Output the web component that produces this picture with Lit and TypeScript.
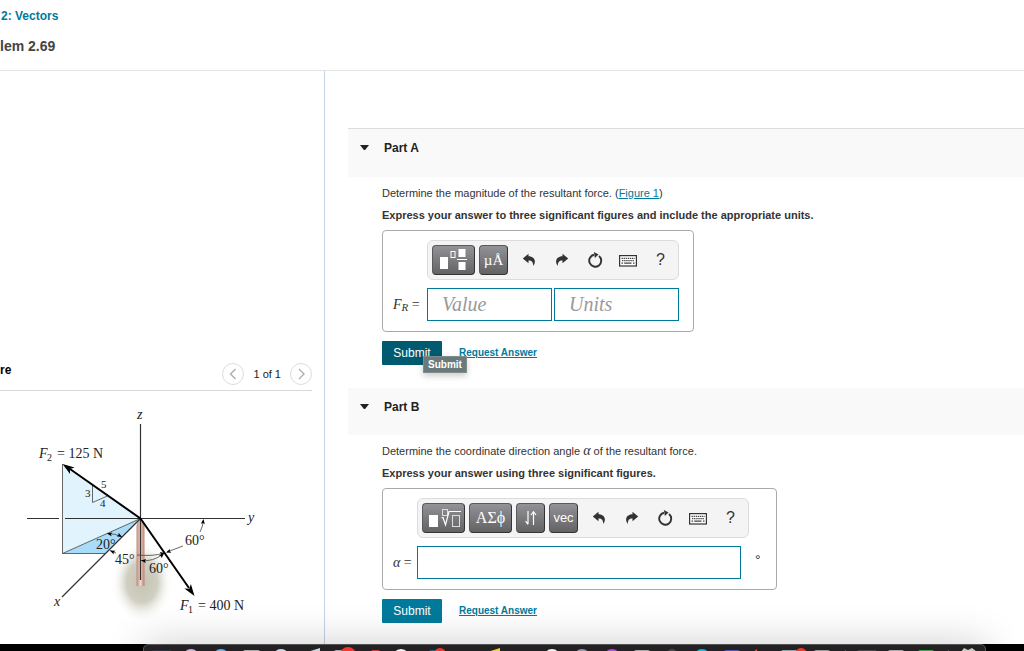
import { LitElement, html, svg, css } from "lit";
import { customElement, property } from "lit/decorators.js";

const undoIcon = html`<svg width="14" height="14" viewBox="0 0 14 14" aria-hidden="true">
  <path d="M6.500 0.800 L0.800 5.500 L6.500 10.200 V7.600 C9.500 7.400 11.200 9 11.200 13 C15 8 12 3.200 6.500 3.200 Z" fill="#333" />
</svg>`;
const redoIcon = html`<svg width="14" height="14" viewBox="0 0 14 14" aria-hidden="true">
  <path d="M7.500 0.800 L13.200 5.500 L7.500 10.200 V7.600 C4.500 7.400 2.800 9 2.800 13 C-1 8 2 3.200 7.500 3.200 Z" fill="#333" />
</svg>`;
const resetIcon = html`<svg width="16" height="16" viewBox="0 0 16 16" aria-hidden="true">
  <path d="M12 4 A6 6 0 1 1 7 2.800" fill="none" stroke="#333" stroke-width="1.900" />
  <path d="M7 0 L11.500 2.600 L7.800 6 Z" fill="#333" />
</svg>`;
const keyboardIcon = html`<svg width="18" height="13" viewBox="0 0 18 13" aria-hidden="true">
  <rect x="0.6" y="1.6" width="16.800" height="10.400" fill="#fff" stroke="#333" stroke-width="1.200" />
  <path d="M2.500 4.300 H15.700 M3 6.600 H15.500" stroke="#444" stroke-width="1.300" stroke-dasharray="1.400 0.700" />
  <path d="M2.500 9.200 H4 M5.200 9.200 H12.500 M14 9.200 H15.500" stroke="#444" stroke-width="1.300" />
</svg>`;
const templateIcon = html`<svg width="29" height="24" viewBox="0 0 29 24" aria-hidden="true">
  <rect x="1" y="9" width="8" height="12" fill="#fff" />
  <rect x="12" y="3.5" width="4" height="6" fill="none" stroke="#fff" />
  <rect x="19.500" y="1" width="7" height="8" fill="#fff" />
  <path d="M18 11.5 H28" stroke="#fff" />
  <rect x="19.500" y="14" width="7" height="8" fill="#fff" />
</svg>`;
const rootIcon = html`<svg width="34" height="24" viewBox="0 0 34 24" aria-hidden="true">
  <rect x="2" y="9" width="9" height="12" fill="#fff" />
  <rect x="15.5" y="3.5" width="5" height="6" fill="none" stroke="#ddd" />
  <path d="M14.5 12 L16 11.5 L18.5 19 L22 5.5 H34" fill="none" stroke="#fff" stroke-width="1.2" />
  <rect x="25.5" y="9.5" width="7" height="11" fill="none" stroke="#ddd" />
</svg>`;
const sortIcon = html`<svg width="13" height="16" viewBox="0 0 13 16" aria-hidden="true">
  <path d="M4 1 V14 M1.5 11 L4 14.3 M9.5 15 V2 M7 5 L9.5 1.7 L12 5" fill="none" stroke="#fff" stroke-width="1.2" />
</svg>`;

@customElement("math-toolbar")
class MathToolbar extends LitElement {
  static styles = css`
    :host { display: block; }
    .bar {
      display: flex; align-items: center; box-sizing: border-box; height: 40px;
      padding: 0 0 0 4px; gap: 4px; background: #f4f4f4; border: 1px solid #dcdcdc; border-radius: 6px;
    }
    button { font-family: "Liberation Sans", Arial, sans-serif; margin: 0; padding: 0; cursor: pointer; flex: none; }
    .key {
      display: flex; align-items: center; justify-content: center; box-sizing: border-box;
      width: 29px; height: 30px; color: #fff; font-size: 13px; line-height: 16px;
      background: linear-gradient(#929297, #636365); border: 1px solid #5a5a5c;
      border-right-color: #333; border-bottom-color: #333; border-radius: 4px;
    }
    .wide { width: 43px; }
    .serif { font-family: "Liberation Serif", "Times New Roman", serif; font-size: 16px; }
    .small { font-size: 15px; }
    .tools { display: flex; }
    .tool {
      display: flex; align-items: center; justify-content: center;
      width: 33px; height: 30px; border: 0; background: none; color: #333; font-size: 16px;
    }
  `;
  @property() kind = "units";

  render() {
    const keys = this.kind === "units"
      ? html`<button class="key wide" aria-label="Templates">${templateIcon}</button>
          <button class="key serif small">µÅ</button>`
      : html`<button class="key wide" aria-label="Templates">${rootIcon}</button>
          <button class="key wide serif">ΑΣϕ</button>
          <button class="key" aria-label="Arrows">${sortIcon}</button>
          <button class="key">vec</button>`;
    return html`<div class="bar">
      ${keys}
      <div class="tools">
        <button class="tool" aria-label="Undo">${undoIcon}</button>
        <button class="tool" aria-label="Redo">${redoIcon}</button>
        <button class="tool" aria-label="Reset">${resetIcon}</button>
        <button class="tool" aria-label="Keyboard shortcuts">${keyboardIcon}</button>
        <button class="tool">?</button>
      </div>
    </div>`;
  }
}

@customElement("force-figure")
class ForceFigure extends LitElement {
  static styles = css`
    :host { display: block; }
    svg { display: block; font-family: "Liberation Serif", "Times New Roman", serif; font-size: 14px; fill: #222; }
    .var { font-style: italic; }
    .sub { font-size: 10px; }
    .small { font-size: 11px; }
    .axis { fill: none; stroke: #333; stroke-width: 1.2; }
    .thin { fill: none; stroke: #444; stroke-width: 0.8; }
    .force { stroke: #000; stroke-width: 2; }
    .head { fill: #000; }
  `;
  render() {
    const tip = (x: number, y: number, a: number) =>
      svg`<path class="head" d="M0 0 L-5 -2 L-4 0 L-5 2 Z" transform="translate(${x} ${y}) rotate(${a})" />`;
    return html`<svg width="270" height="230" viewBox="0 400 270 230" role="img" aria-label="Forces F1 and F2 acting on a post">
      <defs>
        <radialGradient id="ground">
          <stop offset="0" stop-color="#c3c2b2" /><stop offset="0.5" stop-color="#d0cfc2" />
          <stop offset="1" stop-color="#fff" stop-opacity="0" />
        </radialGradient>
        <linearGradient id="post">
          <stop offset="0" stop-color="#c08c7e" /><stop offset="0.35" stop-color="#e0b9ad" />
          <stop offset="0.5" stop-color="#f0ddd6" /><stop offset="0.7" stop-color="#d9aa9c" />
          <stop offset="1" stop-color="#bd8676" />
        </linearGradient>
      </defs>
      <ellipse cx="142" cy="582" rx="31" ry="41" fill="url(#ground)" />
      <path d="M136.500 586 V526 Q137 521 140.500 519 Q144 521 144.500 526 V586 Z" fill="url(#post)" />
      <path d="M62.500 464.500 L140.500 518.500 L62.500 553 Z" fill="#e1f3fd" />
      <path d="M62.500 553.500 L140.500 518.500 L106 553.500 Z" fill="#a9dcf8" />
      <path class="thin" d="M62.500 464 V553.500 H106 M62.500 553.500 L140.500 518.500" />
      <path class="axis" d="M140.500 424 V580 M27 518.500 H59 M65 518.500 H245 M140.500 518.500 L62 597" />
      <path class="thin" d="M92.500 484 V502.500 L107.500 496" />
      <path class="force" d="M140.500 518.500 L70 469 M140.500 518.500 L189 588" />
      <path class="head" d="M0 0 L-12 -4 L-9 0 L-12 4 Z" transform="translate(62.500 464) rotate(214.700)" />
      <path class="head" d="M0 0 L-12 -4 L-9 0 L-12 4 Z" transform="translate(194.500 596) rotate(55)" />
      <path class="thin" d="M107 533.500 Q116 533.500 122 537 M110 550.500 L116 553 M137 555 Q154 556.500 164 553 M141 560.500 Q153 562 163 554 M183 546 L167 552 M200 532 Q203 526 203.500 520" />
      ${tip(107, 533.5, 190)} ${tip(122, 537, 30)} ${tip(110, 550.5, 205)} ${tip(165, 553, -10)}
      ${tip(141, 560.5, 185)} ${tip(164, 553.5, -42)} ${tip(166, 552.5, 160)} ${tip(203.5, 519, -82)}
      <text class="var" x="137" y="419">z</text>
      <text class="var" x="248" y="522">y</text>
      <text class="var" x="54" y="606">x</text>
      <text class="var" x="39" y="458">F</text><text class="sub" x="47" y="461">2</text>
      <text x="57" y="458">= 125 N</text>
      <text class="var" x="180" y="610">F</text><text class="sub" x="188" y="613">1</text>
      <text x="198" y="610">= 400 N</text>
      <text class="small" x="101" y="488">5</text>
      <text class="small" x="85" y="497">3</text>
      <text class="small" x="100" y="507">4</text>
      <text x="96" y="549">20°</text>
      <text x="115" y="564">45°</text>
      <text x="149" y="573">60°</text>
      <text x="185" y="545">60°</text>
    </svg>`;
  }
}

@customElement("app-root")
class AppRoot extends LitElement {
  static styles = css`
    :host {
      display: block; height: 100vh; overflow: hidden; background: #fff; color: #333;
      font-family: "Liberation Sans", Arial, sans-serif; font-size: 11px; line-height: 22px;
    }
    .page { display: flex; flex-direction: column; min-height: 100vh; }
    .top { padding: 5px 0 13px; border-bottom: 1px solid #e4e4e4; }
    .crumb { display: block; padding-left: 1px; color: #007a9c; font-size: 12px; font-weight: bold; text-decoration: none; }
    h1 { margin: 8px 0 0; font-size: 14px; line-height: 22px; color: #444; }
    .cols { display: grid; grid-template-columns: 324px minmax(0, 1fr); flex: 1; }
    .side { padding: 286px 12px 0 0; }
    .fighead { display: flex; align-items: center; height: 33px; border-bottom: 1px solid #d8d8d8; }
    h2 { margin: 0; font-size: 12px; line-height: 22px; color: #000; }
    .fighead h2 { flex: 1; padding-bottom: 8px; }
    .pager { display: flex; align-items: center; gap: 9px; color: #222; }
    .round {
      display: flex; align-items: center; justify-content: center; box-sizing: border-box;
      width: 22px; height: 22px; padding: 0; border: 1px solid #ddd; border-radius: 50%; background: #fff;
    }
    force-figure { padding-top: 9px; }
    .main { border-left: 1px solid #c4d2e6; padding: 57px 0 0 23px; }
    .parthead { box-sizing: border-box; height: 47px; padding: 8px 0 0 12px; background: #f9f9f9; }
    .first { height: 49px; border-top: 1px solid #ddd; }
    .parthead button {
      display: flex; align-items: center; gap: 15px; padding: 0; border: 0; background: none;
      color: #222; font: bold 12px/22px "Liberation Sans", Arial, sans-serif;
    }
    .body { padding: 5px 12px 23px 34px; }
    p { margin: 0; }
    .bold { font-weight: bold; }
    a { color: #007a9c; }
    .math { font-family: "Liberation Serif", "Times New Roman", serif; font-style: italic; font-size: 14px; line-height: 16px; }
    .math sub { font-size: 11px; line-height: 0; vertical-align: -2px; }
    .box {
      display: grid; box-sizing: border-box; width: fit-content; margin-top: 4px; padding: 9px 14px 10px 10px;
      border: 1px solid #aaa; border-radius: 4px; row-gap: 8px; align-items: center;
    }
    .units { grid-template-columns: 34px 252px; }
    .angle { grid-template-columns: 24px 332px 13px; }
    math-toolbar { grid-column: 2; }
    .label { grid-column: 1; white-space: nowrap; }
    .eq { font-style: normal; }
    .fields { display: flex; gap: 2px; }
    .single { padding-right: 8px; }
    input {
      flex: 1; min-width: 0; box-sizing: border-box; height: 33px; padding: 0 14px; border: 1px solid #007a9c;
      border-radius: 0; background: #fff; outline: 0;
      font: 20px "Liberation Serif", "Times New Roman", serif; color: #222;
    }
    input::placeholder { color: #999; font-style: italic; opacity: 1; }
    .degree { padding: 0 0 6px 6px; font-size: 14px; }
    .actions { display: flex; align-items: center; gap: 17px; margin-top: 9px; }
    .submit {
      width: 60px; height: 24px; padding: 0; border: 0; border-radius: 1px; background: #007a9c; color: #fff;
      font: 12px "Liberation Sans", Arial, sans-serif;
    }
    .hovered { background: #005a70; }
    .anchor { position: relative; display: flex; }
    .tip {
      position: absolute; left: 41px; top: 15px; padding: 0 4px; border: 1px solid #7f8c8c; z-index: 1;
      background: #6a7a7c; color: #fff; font-size: 10px; line-height: 15px; font-weight: bold;
      box-shadow: 0 3px 6px rgba(0, 0, 0, 0.2);
    }
    .request { font-size: 10px; font-weight: bold; }
    .strip { position: fixed; left: 0; right: 0; bottom: 0; height: 7px; background: #000; }
    .dock {
      position: fixed; left: 143px; right: 38px; bottom: -53px; height: 60px; box-sizing: border-box;
      background: #242124; border: 1px solid #555; border-radius: 5px; overflow: hidden;
      box-shadow: 0 0 42px rgba(0, 0, 0, 0.2);
    }
    .dock svg { display: block; }
  `;

  private chevron(d: string) {
    return html`<svg width="10" height="12" viewBox="0 0 10 12" aria-hidden="true"><path d=${d} fill="none" stroke="#aaa" stroke-width="1.3" /></svg>`;
  }

  private head(name: string, extra = "") {
    return html`<div class="parthead ${extra}">
      <button aria-expanded="true">
        <svg width="9" height="6" viewBox="0 0 9 6" aria-hidden="true"><path d="M0 0 H9 L5.500 4.500 Q4.500 5.500 3.500 4.500 Z" fill="#222" /></svg>
        ${name}
      </button>
    </div>`;
  }

  render() {
    const bubbles: [number, number, string][] = [
      [47, 8, "#c9b4d6"], [77, 8, "#62b5ea"], [137, 8, "#c8dde4"], [257, 9, "#f4f4f4"],
      [408, 8, "#f4f4f4"], [438, 8, "#9299a6"], [468, 8, "#b04fdc"], [528, 5, "#4a484b"], [558, 8, "#14b5ec"],
    ];
    const tiles: [number, number, string][] = [
      [7, 21, "#26343c"], [99, 17, "#aaa"], [190, 15, "#aaa"], [227, 9, "#d13a32"], [285, 10, "#27627e"],
      [490, 16, "#aaa"], [580, 16, "#5056b8"], [637, 17, "#8da3ae"], [670, 16, "#999"],
      [713, 20, "#4a484b"], [744, 16, "#aaa"], [774, 16, "#3fa84c"],
    ];
    return html`
      <div class="page">
        <header class="top">
          <a class="crumb" href="#">2: Vectors</a>
          <h1>lem 2.69</h1>
        </header>
        <div class="cols">
          <aside class="side">
            <div class="fighead">
              <h2>re</h2>
              <div class="pager">
                <button class="round" aria-label="Previous">${this.chevron("M7.500 1 L2.500 6 L7.500 11")}</button>
                <span>1 of 1</span>
                <button class="round" aria-label="Next">${this.chevron("M3 1 L8 6 L3 11")}</button>
              </div>
            </div>
            <force-figure></force-figure>
          </aside>
          <main class="main">
            <section>
              ${this.head("Part A", "first")}
              <div class="body">
                <p>Determine the magnitude of the resultant force. (<a href="#">Figure 1</a>)</p>
                <p class="bold">Express your answer to three significant figures and include the appropriate units.</p>
                <div class="box units">
                  <math-toolbar kind="units"></math-toolbar>
                  <label class="label math" for="value">F<sub>R</sub> <span class="eq">=</span></label>
                  <div class="fields">
                    <input id="value" placeholder="Value" />
                    <input aria-label="Units" placeholder="Units" />
                  </div>
                </div>
                <div class="actions">
                  <div class="anchor">
                    <button class="submit hovered">Submit</button>
                    <span class="tip" role="tooltip">Submit</span>
                  </div>
                  <a class="request" href="#">Request Answer</a>
                </div>
              </div>
            </section>
            <section>
              ${this.head("Part B")}
              <div class="body">
                <p>Determine the coordinate direction angle <span class="math">α</span> of the resultant force.</p>
                <p class="bold">Express your answer using three significant figures.</p>
                <div class="box angle">
                  <math-toolbar kind="angle"></math-toolbar>
                  <label class="label math" for="alpha">α <span class="eq">=</span></label>
                  <div class="fields single"><input id="alpha" /></div>
                  <span class="degree">°</span>
                </div>
                <div class="actions">
                  <button class="submit">Submit</button>
                  <a class="request" href="#">Request Answer</a>
                </div>
              </div>
            </section>
          </main>
        </div>
      </div>
      <div class="strip"></div>
      <div class="dock">
        <svg width="842" height="58" viewBox="0 0 842 58" aria-hidden="true">
          ${tiles.map(([x, w, c]) => svg`<rect x=${x} y="5" width=${w} height="20" rx="2" fill=${c} />`)}
          ${bubbles.map(([x, r, c]) => svg`<circle cx=${x} cy=${4 + r} r=${r} fill=${c} />`)}
          <circle cx="204" cy="10" r="8" fill="#f5372b" />
          <circle cx="296" cy="9" r="6" fill="#f5372b" />
          <circle cx="657" cy="9" r="6" fill="#f5372b" />
          <path d="M160 8 L176 3 V8 Z" fill="#ccd6da" />
          <path d="M340 8 L356 3 V8 Z" fill="#f0d22c" />
          <path d="M608 8 L613 4 V8 Z" fill="#e2542f" />
          <path d="M701.500 5 V20 M804.500 5 V20" stroke="#555" />
          <path d="M817 7 L820 3 L824 5 L828 3 L833 7 Z" fill="#c9ccc4" />
        </svg>
      </div>
    `;
  }
}
